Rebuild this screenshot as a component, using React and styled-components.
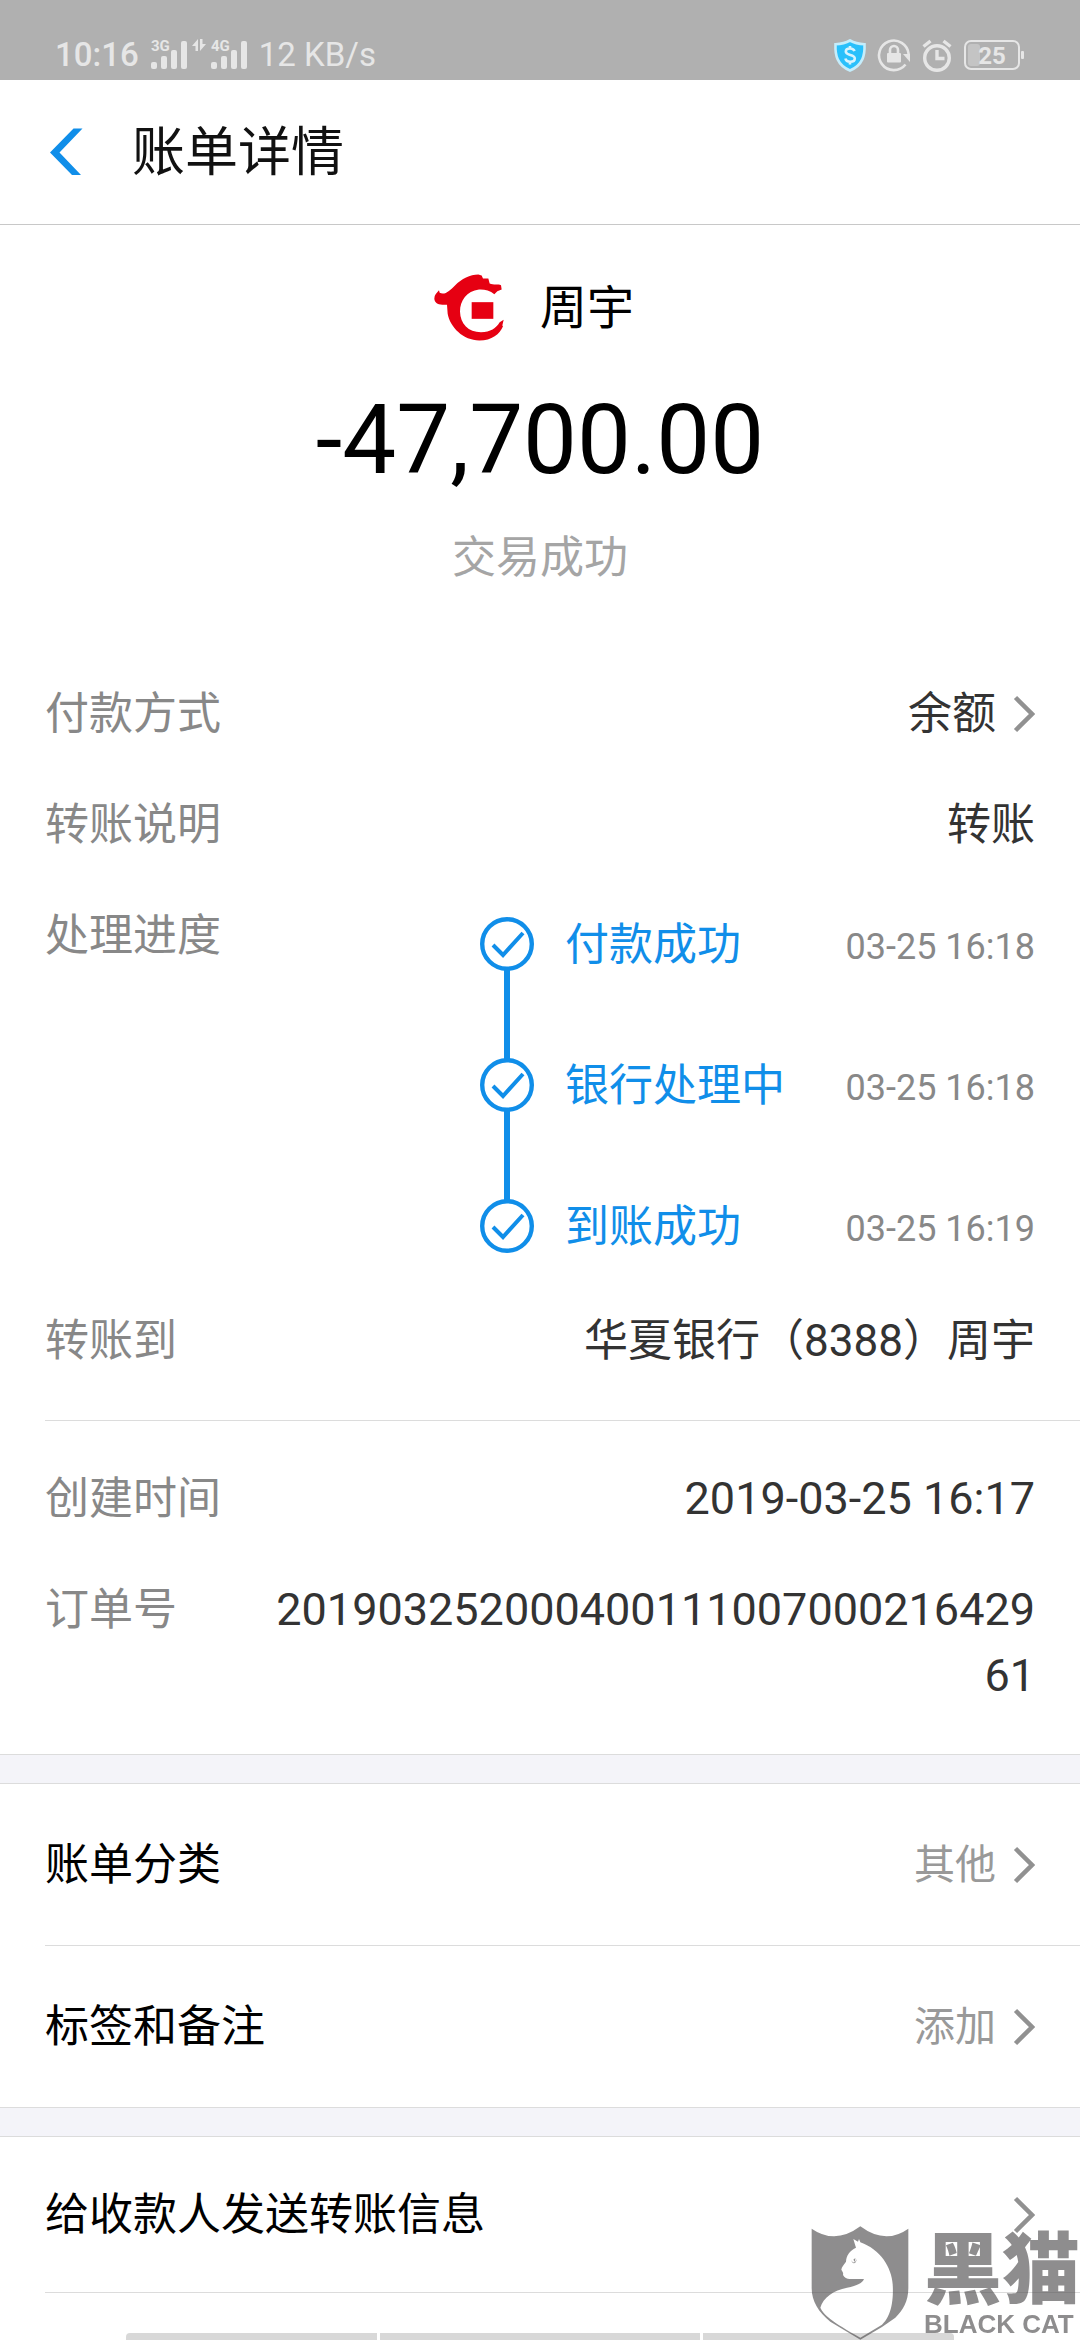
import React from 'react';
import styled, { createGlobalStyle, css } from 'styled-components';

const GlobalStyle = createGlobalStyle`
  * {
    box-sizing: border-box;
  }

  body {
    margin: 0;
    background: #fff;
    font-family: Roboto, "Noto Sans CJK SC", sans-serif;
  }

  button {
    margin: 0;
    padding: 0;
    border: none;
    background: none;
    color: inherit;
    font: inherit;
    text-align: left;
  }

  svg {
    display: block;
    flex: none;
  }
`;

const Page = styled.div`
  display: flex;
  flex-direction: column;
  min-height: 100vh;
`;

const StatusBar = styled.div`
  display: flex;
  justify-content: space-between;
  height: 80px;
  padding: 36px 55px 5px;
  background: #b0b0b0;
  color: #e6e6e6;
  font-size: 33px;
  line-height: 38px;
`;

const StatusGroup = styled.div`
  display: flex;
  align-items: ${({ $align }) => $align || 'flex-start'};
  gap: ${({ $gap }) => $gap};
`;

const Clock = styled.span`
  font-weight: 500;
`;

const StatusIcon = styled.svg`
  overflow: visible;
`;

const Header = styled.header`
  display: flex;
  align-items: center;
  gap: 48px;
  height: 145px;
  padding: 0 48px;
  border-bottom: 1px solid #c8c8c8;
`;

const BackButton = styled.button`
  display: flex;
  width: 36px;
`;

const Title = styled.h1`
  margin: 0;
  padding-top: 2px;
  color: #111;
  font-size: 53px;
  font-weight: 400;
  line-height: 66px;
`;

const Summary = styled.section`
  display: flex;
  flex-direction: column;
  align-items: center;
  padding: 49px 45px 90px;
`;

const Payee = styled.div`
  display: flex;
  align-items: center;
  gap: 36px;
  padding-right: 12px;
  color: #000;
  font-size: 47px;
  line-height: 66px;
`;

const Amount = styled.div`
  margin: 43px 0 29px;
  color: #000;
  font-size: 96px;
  line-height: 112px;
`;

const TradeStatus = styled.div`
  color: #a5a5a5;
  font-size: 44px;
  line-height: 66px;
`;

const Details = styled.section`
  display: flex;
  flex-direction: column;
  gap: 45px;
  padding: ${({ $padding }) => $padding};
  font-size: 44px;
  line-height: 66px;
`;

const DetailRow = styled.div`
  display: flex;
  justify-content: space-between;
`;

const Label = styled.span`
  flex: none;
  color: #888;
`;

const valueStyle = css`
  color: #333;
  text-align: right;
`;

const Value = styled.span`
  ${valueStyle}
`;

const NumberValue = styled.span`
  ${valueStyle}
  max-width: 780px;
  font-size: 45px;
  word-break: break-all;
`;

const LinkValue = styled.button`
  ${valueStyle}
  display: flex;
  align-items: center;
  gap: 16px;
`;

const Steps = styled.ol`
  display: flex;
  flex-direction: column;
  width: 555px;
  margin: 0;
  padding: 14px 0 0;
  list-style: none;
`;

const Step = styled.li`
  display: flex;
  height: 141px;

  &:last-child {
    height: 64px;
  }
`;

const StepMark = styled.div`
  display: flex;
  flex-direction: column;
  align-items: center;
  width: 54px;
  margin-right: 31px;
`;

const StepLine = styled.div`
  flex: none;
  width: 6px;
  height: 89px;
  margin: -1px 0;
  background: #108ee9;
`;

const StepName = styled.span`
  flex: 1;
  color: #108ee9;
  line-height: 56px;
`;

const StepTime = styled.time`
  color: #888;
  font-size: 36px;
  line-height: 60px;
`;

const Divider = styled.hr`
  width: calc(100% - 45px);
  height: 1px;
  margin: 0 0 0 45px;
  border: none;
  background: #dcdcdc;
`;

const Spacer = styled.div`
  height: 30px;
  border-top: 1px solid #dcdcdc;
  border-bottom: 1px solid #dcdcdc;
  background: #f4f4f9;
`;

const MenuItem = styled.button`
  display: flex;
  align-items: center;
  justify-content: space-between;
  width: 100%;
  height: ${({ $short }) => ($short ? '155px' : '161px')};
  padding: 0 45px;
  color: #000;
  font-size: 44px;
  line-height: 66px;
`;

const MenuValue = styled.span`
  display: flex;
  align-items: center;
  gap: 16px;
  color: #999;
  font-size: 41px;
`;

const NavHint = styled.div`
  display: grid;
  grid-template-columns: 251fr 320fr 251fr;
  gap: 3px;
  height: 7px;
  margin: auto 126px 0;
  overflow: hidden;
  border-radius: 4px 4px 0 0;

  span {
    background: #d8d8d8;
  }
`;

const Watermark = styled.div`
  position: fixed;
  right: 0;
  bottom: 0;
  display: flex;
  align-items: flex-end;
  gap: 15px;
  color: #4a4849;
  opacity: 0.62;
`;

const WatermarkText = styled.div`
  display: flex;
  flex-direction: column;
  font-family: "Liberation Sans", "Noto Sans CJK SC", sans-serif;
`;

const WatermarkName = styled.span`
  font-size: 78px;
  font-weight: 900;
  line-height: 74px;
`;

const WatermarkLatin = styled.span`
  font-size: 26px;
  font-weight: 700;
  line-height: 32px;
`;

const steps = [
  { name: '付款成功', time: '03-25 16:18' },
  { name: '银行处理中', time: '03-25 16:18' },
  { name: '到账成功', time: '03-25 16:19' },
];

const SignalIcon = ({ label }) => (
  <StatusIcon width="36" height="34" viewBox="0 0 36 34" fill="#e6e6e6">
    <text x="0" y="15" fontSize="15" fontWeight="700">{label}</text>
    <rect x="0" y="26" width="6" height="7" rx="2" />
    <rect x="10" y="20" width="6" height="13" rx="2" />
    <rect x="20" y="14" width="6" height="19" rx="2" />
    <rect x="30" y="5" width="6" height="28" rx="2" />
  </StatusIcon>
);

const DataArrows = () => (
  <StatusIcon width="14" height="34" viewBox="0 0 14 34" fill="#e6e6e6">
    <path d="M6 3v12H3.500V10H0z" />
    <path d="M8 3h2.500v5H14L8 15z" />
  </StatusIcon>
);

const ShieldIcon = () => (
  <StatusIcon width="32" height="33" viewBox="0 0 32 33">
    <path d="M16 1.500c4.500 2.500 9.500 3.500 14.500 3.800C31 16 29 26 16 31.500 3 26 1 16 1.500 5.300 6.500 5 11.500 4 16 1.500z" fill="#29c0fb" stroke="#c5edfb" strokeWidth="2.600" />
    <path d="M20.500 12.200c-.6-2-2.300-2.700-4.500-2.700-2.400 0-4.200 1-4.200 3.100 0 4.500 9 2.300 9 6.900 0 2.200-2 3.200-4.500 3.200-2.600 0-4.500-1-4.900-3.200M16 7v3M16 22v3.500" fill="none" stroke="#d8f3fd" strokeWidth="2.600" />
  </StatusIcon>
);

const LockIcon = () => (
  <StatusIcon width="32" height="33" viewBox="0 0 32 33" fill="none" stroke="#e6e6e6">
    <path d="M30.600 15A14.800 14.800 0 1 0 27.500 25.500" strokeWidth="2.600" />
    <path d="M25 15h7v8z" fill="#e6e6e6" stroke="none" />
    <rect x="9" y="14" width="14" height="9.500" rx="1" fill="#e6e6e6" stroke="none" />
    <path d="M12 15v-4a4 4 0 0 1 8 0v4" strokeWidth="2.600" />
  </StatusIcon>
);

const AlarmIcon = () => (
  <StatusIcon width="30" height="33" viewBox="0 0 30 33" fill="none" stroke="#e6e6e6">
    <circle cx="15" cy="19" r="12.300" strokeWidth="3.400" />
    <path d="M15 11v8.500h7.500" strokeWidth="3.400" />
    <path d="M1.500 7.500L8.500 2M21.500 2l7 5.500" strokeWidth="3.400" />
  </StatusIcon>
);

const BatteryIcon = () => (
  <StatusIcon width="61" height="33" viewBox="0 0 61 33">
    <rect x="1" y="2" width="54" height="28" rx="6" fill="none" stroke="#e6e6e6" strokeWidth="2" />
    <rect x="4" y="5" width="12" height="22" rx="3" fill="#c4c4c4" />
    <rect x="57" y="12" width="3" height="8" rx="1" fill="#e6e6e6" />
    <text x="28" y="25" fontSize="24" fontWeight="700" textAnchor="middle" fill="#e6e6e6">25</text>
  </StatusIcon>
);

const BackIcon = () => (
  <svg width="36" height="48" viewBox="0 0 36 48" fill="#108ee9">
    <path d="M25.500 0.500H34.500L11.500 24.500 33 47H24L2 24.500z" />
  </svg>
);

const ChevronIcon = () => (
  <svg width="23" height="40" viewBox="0 0 23 40" fill="none" stroke="#919191" strokeWidth="4.500">
    <path d="M3.500 3.500L20 20 3.500 36.500" />
  </svg>
);

const BankLogo = () => (
  <svg width="70" height="67" viewBox="102 76 210 200" fill="#e60012">
    <path d="M117 124L119 132C135 140 150 125 165 110C185 90 210 77 235 77L245 80L249 89L265 89L269 104C280 109 295 105 303 109L305 122L292 127L283 136C270 125 252 121 237 122C200 127 180 155 180 188C181 225 205 250 243 250C272 249 288 238 299 220L311 213L307 230L309 232C300 255 275 275 238 275C190 275 150 235 143 195L141 168L127 168C112 167 103 160 103 149C103 138 110 132 117 124Z" />
    <rect x="215" y="160" width="65" height="50" />
  </svg>
);

const StepCheck = () => (
  <svg width="54" height="54" viewBox="0 0 54 54" fill="none" stroke="#108ee9">
    <circle cx="27" cy="27" r="24.800" strokeWidth="4.400" />
    <path d="M13 28l10 10 20-22" strokeWidth="4" />
  </svg>
);

const CatShield = () => (
  <svg width="98" height="114" viewBox="92 75 294 342" fill="currentColor" fillRule="evenodd">
    <path d="M94 83Q165 132 240 76Q315 132 384 83V262C384 300 368 328 345 350L305 378L240 416L150 362C115 335 94 300 94 262ZM219 114L227 140C207 150 198 164 197 182C190 192 184 198 183 206C187 212 190 216 188 222C192 230 200 234 208 234L251 234C246 246 232 254 200 260C160 268 128 290 120 320C130 342 155 362 240 410L305 371C335 345 340 290 337 250C334 200 300 145 240 124L236 114L233 122Z" />
    <path d="M213 174C214 186 224 190 229 174C228 190 214 192 213 174ZM219 176l6-5-1 12z" />
  </svg>
);

const App = () => {
  return (
    <Page lang="zh-CN">
      <GlobalStyle />
      <StatusBar>
        <StatusGroup $gap="12px">
          <Clock>10:16</Clock>
          <StatusGroup $gap="5px">
            <SignalIcon label="3G" />
            <DataArrows />
            <SignalIcon label="4G" />
          </StatusGroup>
          <span>12 KB/s</span>
        </StatusGroup>
        <StatusGroup $gap="12px" $align="center">
          <ShieldIcon />
          <LockIcon />
          <AlarmIcon />
          <BatteryIcon />
        </StatusGroup>
      </StatusBar>

      <Header>
        <BackButton aria-label="返回"><BackIcon /></BackButton>
        <Title>账单详情</Title>
      </Header>

      <Summary>
        <Payee>
          <BankLogo />
          <span>周宇</span>
        </Payee>
        <Amount>-47,700.00</Amount>
        <TradeStatus>交易成功</TradeStatus>
      </Summary>

      <Details $padding="0 45px 46px">
        <DetailRow>
          <Label>付款方式</Label>
          <LinkValue>余额<ChevronIcon /></LinkValue>
        </DetailRow>
        <DetailRow>
          <Label>转账说明</Label>
          <Value>转账</Value>
        </DetailRow>
        <DetailRow>
          <Label>处理进度</Label>
          <Steps>
            {steps.map((step, i) => (
              <Step key={step.name}>
                <StepMark>
                  <StepCheck />
                  {i < steps.length - 1 && <StepLine />}
                </StepMark>
                <StepName>{step.name}</StepName>
                <StepTime>{step.time}</StepTime>
              </Step>
            ))}
          </Steps>
        </DetailRow>
        <DetailRow>
          <Label>转账到</Label>
          <Value>华夏银行（8388）周宇</Value>
        </DetailRow>
      </Details>
      <Divider />
      <Details $padding="45px">
        <DetailRow>
          <Label>创建时间</Label>
          <NumberValue>2019-03-25 16:17</NumberValue>
        </DetailRow>
        <DetailRow>
          <Label>订单号</Label>
          <NumberValue>20190325200040011100700021642961</NumberValue>
        </DetailRow>
      </Details>

      <Spacer />
      <MenuItem>
        账单分类
        <MenuValue>其他<ChevronIcon /></MenuValue>
      </MenuItem>
      <Divider />
      <MenuItem>
        标签和备注
        <MenuValue>添加<ChevronIcon /></MenuValue>
      </MenuItem>
      <Spacer />
      <MenuItem $short>
        给收款人发送转账信息
        <MenuValue><ChevronIcon /></MenuValue>
      </MenuItem>
      <Divider />

      <NavHint>
        <span />
        <span />
        <span />
      </NavHint>

      <Watermark>
        <CatShield />
        <WatermarkText>
          <WatermarkName>黑猫</WatermarkName>
          <WatermarkLatin>BLACK CAT</WatermarkLatin>
        </WatermarkText>
      </Watermark>
    </Page>
  );
};

export default App;
